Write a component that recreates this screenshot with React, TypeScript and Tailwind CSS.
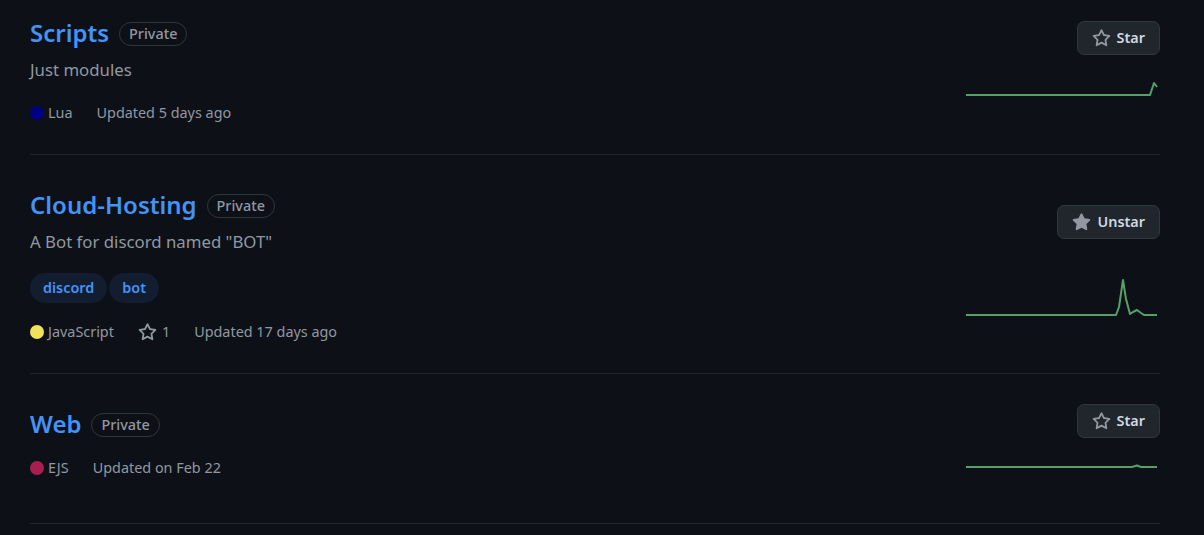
import React from 'react'

type Repo = {
  name: string
  description?: string
  topics?: string[]
  language: string
  language_color: string
  stars?: number
  updated: string
  starred: boolean
  item_class: string
  button_class: string
  chart_class: string
  points: string
}

const repos: Repo[] = [
  {
    name: 'Scripts',
    description: 'Just modules',
    language: 'Lua',
    language_color: 'bg-[#000080]',
    updated: 'Updated 5 days ago',
    starred: false,
    item_class: 'pt-[15px]',
    button_class: 'mt-[6px]',
    chart_class: 'mb-[27px]',
    points: '0,28 184,28 188,16 191,20',
  },
  {
    name: 'Cloud-Hosting',
    description: 'A Bot for discord named "BOT"',
    topics: ['discord', 'bot'],
    language: 'JavaScript',
    language_color: 'bg-[#f1e05a]',
    stars: 1,
    updated: 'Updated 17 days ago',
    starred: true,
    item_class: 'pt-[32px]',
    button_class: 'mt-[18px]',
    chart_class: 'mb-[26px]',
    points:
      '0,28 150,28 153,20 157,-7 160,12 164,27 167,25 171,23 175,26 178,28 191,28',
  },
  {
    name: 'Web',
    language: 'EJS',
    language_color: 'bg-[#a91e50]',
    updated: 'Updated on Feb 22',
    starred: false,
    item_class: 'pt-[32px]',
    button_class: '-mt-[2px]',
    chart_class: 'mt-[1px] mb-[24px]',
    points: '0,28 166,28 171,26.5 175,28 191,28',
  },
]

function StarIcon({ filled }: { filled: boolean }): React.ReactElement {
  return (
    <svg width="19" height="19" viewBox="0 0 16 16" fill="#9198a1" aria-hidden="true">
      {filled ? (
        <path d="M8 .25a.75.75 0 0 1 .673.418l1.882 3.815 4.21.612a.75.75 0 0 1 .416 1.279l-3.046 2.97.719 4.192a.751.751 0 0 1-1.088.791L8 12.347l-3.766 1.98a.75.75 0 0 1-1.088-.79l.72-4.194L.818 6.374a.75.75 0 0 1 .416-1.28l4.21-.611L7.327.668A.75.75 0 0 1 8 .25Z" />
      ) : (
        <path d="M8 .25a.75.75 0 0 1 .673.418l1.882 3.815 4.21.612a.75.75 0 0 1 .416 1.279l-3.046 2.97.719 4.192a.751.751 0 0 1-1.088.791L8 12.347l-3.766 1.98a.75.75 0 0 1-1.088-.79l.72-4.194L.818 6.374a.75.75 0 0 1 .416-1.28l4.21-.611L7.327.668A.75.75 0 0 1 8 .25Zm0 2.445L6.615 5.5a.75.75 0 0 1-.564.41l-3.097.45 2.24 2.184a.75.75 0 0 1 .216.664l-.528 3.084 2.769-1.456a.75.75 0 0 1 .698 0l2.77 1.456-.53-3.084a.75.75 0 0 1 .216-.664l2.24-2.183-3.096-.45a.75.75 0 0 1-.564-.41L8 2.694Z" />
      )}
    </svg>
  )
}

function RepoItem({ repo }: { repo: Repo }): React.ReactElement {
  return (
    <li className={`flex justify-between border-b border-[#21262d] pb-[30px] ${repo.item_class}`}>
      <div className="flex flex-col items-start">
        <div className="mb-[6px] flex items-center">
          <a className="text-[24px] font-semibold leading-[36px] text-[#4493f8]">{repo.name}</a>
          <span className="ml-[10px] mt-[1px] rounded-full border border-[#30363d] px-[9px] text-[14.4px] font-medium leading-[22px] text-[#9198a1]">
            Private
          </span>
        </div>
        {repo.description !== undefined ? (
          <p className="m-0 text-[16.8px] leading-[25px] text-[#9198a1]">{repo.description}</p>
        ) : null}
        {repo.topics !== undefined ? (
          <div className="mt-[19px] flex gap-[2px]">
            {repo.topics.map((topic) => (
              <a
                key={topic}
                className="rounded-full bg-[#121d2f] px-[13px] text-[14.4px] font-semibold leading-[30px] text-[#4493f8]"
              >
                {topic}
              </a>
            ))}
          </div>
        ) : null}
        <div
          className={`${repo.topics !== undefined ? 'mt-[18px]' : repo.description !== undefined ? 'mt-[20px]' : 'mt-[9px]'} flex items-center text-[14.4px] leading-[22px] text-[#9198a1]`}
        >
          <span className="mr-[24px] flex items-center">
            <span className={`mr-[4px] inline-block h-[14px] w-[14px] rounded-full ${repo.language_color}`} />
            {repo.language}
          </span>
          {repo.stars !== undefined ? (
            <span className="mr-[24px] flex items-center gap-[5px]">
              <StarIcon filled={false} />
              {repo.stars}
            </span>
          ) : null}
          <span>{repo.updated}</span>
        </div>
      </div>
      <div className="flex flex-col items-end justify-between">
        <button
          type="button"
          className={`flex h-[34px] items-center gap-[6px] rounded-[7px] border border-[#30363d] bg-[#21262d] px-[14px] text-[14.4px] font-semibold text-[#d1d7e0] ${repo.button_class}`}
        >
          <StarIcon filled={repo.starred} />
          {repo.starred ? 'Unstar' : 'Star'}
        </button>
        <svg
          width="192"
          height="30"
          viewBox="0 0 192 30"
          className={`mr-[2px] overflow-visible ${repo.chart_class}`}
        >
          <polyline
            points={repo.points}
            fill="none"
            stroke="#56a167"
            strokeWidth="2"
            strokeLinejoin="round"
          />
        </svg>
      </div>
    </li>
  )
}

export default function App(): React.ReactElement {
  return (
    <div
      className="min-h-[535px] bg-[#0d1117] pl-[30px] pr-[44px]"
      style={{ fontFamily: '"Noto Sans", "Liberation Sans", sans-serif' }}
    >
      <ul className="m-0 list-none p-0">
        {repos.map((repo) => (
          <RepoItem key={repo.name} repo={repo} />
        ))}
      </ul>
    </div>
  )
}
